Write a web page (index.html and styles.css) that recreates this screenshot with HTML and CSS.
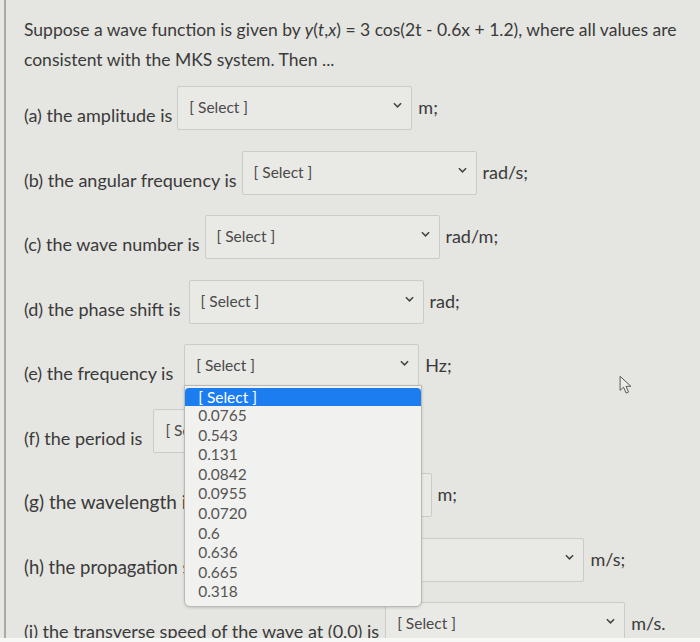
FILE: index.html
```html
<!DOCTYPE html>
<html>
<head>
<meta charset="utf-8">
<link rel="stylesheet" href="styles.css">
</head>
<body>
<div class="page">
  <p class="intro">Suppose a wave function is given by <i>y</i>(<i>t</i>,<i>x</i>) = 3 cos(2t - 0.6x + 1.2), where all values are consistent with the MKS system. Then ...</p>

  <div class="row">
    <span class="label">(a) the amplitude is</span>
    <span class="sel"><span class="sel-text">[ Select ]</span><svg class="chev" viewBox="0 0 10 6"><path d="M1 1 L5 5 L9 1"/></svg></span>
    <span class="unit">m;</span>
  </div>
  <div class="row">
    <span class="label">(b) the angular frequency is</span>
    <span class="sel"><span class="sel-text">[ Select ]</span><svg class="chev" viewBox="0 0 10 6"><path d="M1 1 L5 5 L9 1"/></svg></span>
    <span class="unit">rad/s;</span>
  </div>
  <div class="row">
    <span class="label">(c) the wave number is</span>
    <span class="sel"><span class="sel-text">[ Select ]</span><svg class="chev" viewBox="0 0 10 6"><path d="M1 1 L5 5 L9 1"/></svg></span>
    <span class="unit">rad/m;</span>
  </div>
  <div class="row">
    <span class="label">(d) the phase shift is</span>
    <span class="sel spaced"><span class="sel-text">[ Select ]</span><svg class="chev" viewBox="0 0 10 6"><path d="M1 1 L5 5 L9 1"/></svg></span>
    <span class="unit">rad;</span>
  </div>
  <div class="row">
    <span class="label">(e) the frequency is</span>
    <span class="sel wide"><span class="sel-text">[ Select ]</span><svg class="chev" viewBox="0 0 10 6"><path d="M1 1 L5 5 L9 1"/></svg>
      <ul class="menu">
        <li class="active">[ Select ]</li>
        <li>0.0765</li>
        <li>0.543</li>
        <li>0.131</li>
        <li>0.0842</li>
        <li>0.0955</li>
        <li>0.0720</li>
        <li>0.6</li>
        <li>0.636</li>
        <li>0.665</li>
        <li>0.318</li>
      </ul>
    </span>
    <span class="unit">Hz;</span>
  </div>
  <div class="row">
    <span class="label">(f) the period is</span>
    <span class="sel wide"><span class="sel-text">[ Select ]</span><svg class="chev" viewBox="0 0 10 6"><path d="M1 1 L5 5 L9 1"/></svg></span>
    <span class="unit">s;</span>
  </div>
  <div class="row">
    <span class="label big">(g) the wavelength is</span>
    <span class="sel tight"><span class="sel-text">[ Select ]</span><svg class="chev" viewBox="0 0 10 6"><path d="M1 1 L5 5 L9 1"/></svg></span>
    <span class="unit">m;</span>
  </div>
  <div class="row">
    <span class="label mid">(h) the propagation speed of the wave is</span>
    <span class="sel snug"><span class="sel-text">[ Select ]</span><svg class="chev" viewBox="0 0 10 6"><path d="M1 1 L5 5 L9 1"/></svg></span>
    <span class="unit">m/s;</span>
  </div>
  <div class="row">
    <span class="label">(i) the transverse speed of the wave at (0,0) is</span>
    <span class="sel long"><span class="sel-text">[ Select ]</span><svg class="chev" viewBox="0 0 10 6"><path d="M1 1 L5 5 L9 1"/></svg></span>
    <span class="unit">m/s.</span>
  </div>
</div>
<div class="bottom-strip"></div>
<svg class="cursor" viewBox="0 0 12 18"><path d="M1 1 L1 14 L4.2 11 L6.6 16.5 L8.8 15.5 L6.5 10.2 L11 10.2 Z"/></svg>
</body>
</html>
```

FILE: styles.css
```css
html, body {
  margin: 0;
  padding: 0;
}
body {
  width: 700px;
  height: 642px;
  overflow: hidden;
  background: #e7e7e3;
  font-family: Lato, "Open Sans", sans-serif;
  color: #3a3a3a;
  position: relative;
}
.page {
  margin-left: 4px;
  border-left: 2px solid #a9a9a5;
  height: 642px;
  padding-left: 18px;
  box-sizing: border-box;
  background: #e5e5e1;
}
.intro {
  margin: 0;
  padding-top: 15px;
  font-size: 17.5px;
  line-height: 30px;
  width: 672px;
}
.intro i {
  font-style: italic;
}
.row {
  display: flex;
  align-items: flex-start;
  margin-top: 20.5px;
  height: 44px;
}
.row:first-of-type {
  margin-top: 11px;
}
.label {
  font-size: 18px;
  line-height: 22px;
  padding-top: 18px;
  white-space: nowrap;
}
.label.big {
  font-size: 19px;
}
.label.mid {
  font-size: 18.5px;
}
.sel {
  position: relative;
  width: 235px;
  height: 44px;
  box-sizing: border-box;
  border: 1px solid #cbcbc7;
  border-radius: 2px;
  background: #e9e9e5;
  margin-left: 5px;
  flex: none;
}
.sel.spaced {
  margin-left: 8px;
}
.sel.wide {
  margin-left: 11px;
}
.sel.tight {
  margin-left: 2px;
}
.sel.snug {
  width: 234px;
  margin-left: 3px;
}
.sel.long {
  width: 240px;
  margin-left: 6px;
}
.sel-text {
  position: absolute;
  left: 11px;
  top: 10px;
  font-size: 15.5px;
  line-height: 20px;
  color: #4a4a4a;
  white-space: nowrap;
}
.chev {
  position: absolute;
  right: 9px;
  top: 15px;
  width: 9px;
  height: 6px;
  fill: none;
  stroke: #444;
  stroke-width: 1.7;
}
.unit {
  font-size: 18px;
  line-height: 22px;
  padding-top: 10px;
  margin-left: 6px;
  white-space: nowrap;
}
.menu {
  position: absolute;
  left: -1px;
  top: 40px;
  width: 236px;
  margin: 0;
  padding: 2px 0 4px;
  list-style: none;
  background: #f1f1ef;
  border: 1px solid #b9b9b6;
  border-radius: 0 0 6px 6px;
  box-shadow: 0 1px 3px rgba(0,0,0,0.15);
  z-index: 5;
}
.menu li {
  font-size: 15.5px;
  line-height: 19.6px;
  padding-left: 13px;
  color: #555;
}
.menu li.active {
  background: #1b7def;
  color: #fff;
  border-radius: 4px 4px 0 0;
  line-height: 18px;
}
.bottom-strip {
  position: absolute;
  left: 0;
  bottom: 0;
  width: 700px;
  height: 4px;
  background: #f7f7f6;
}
.cursor {
  position: absolute;
  left: 619px;
  top: 375px;
  width: 13px;
  height: 20px;
  fill: #ecece8;
  stroke: #555;
  stroke-width: 0.9;
  stroke-linejoin: round;
}
```
